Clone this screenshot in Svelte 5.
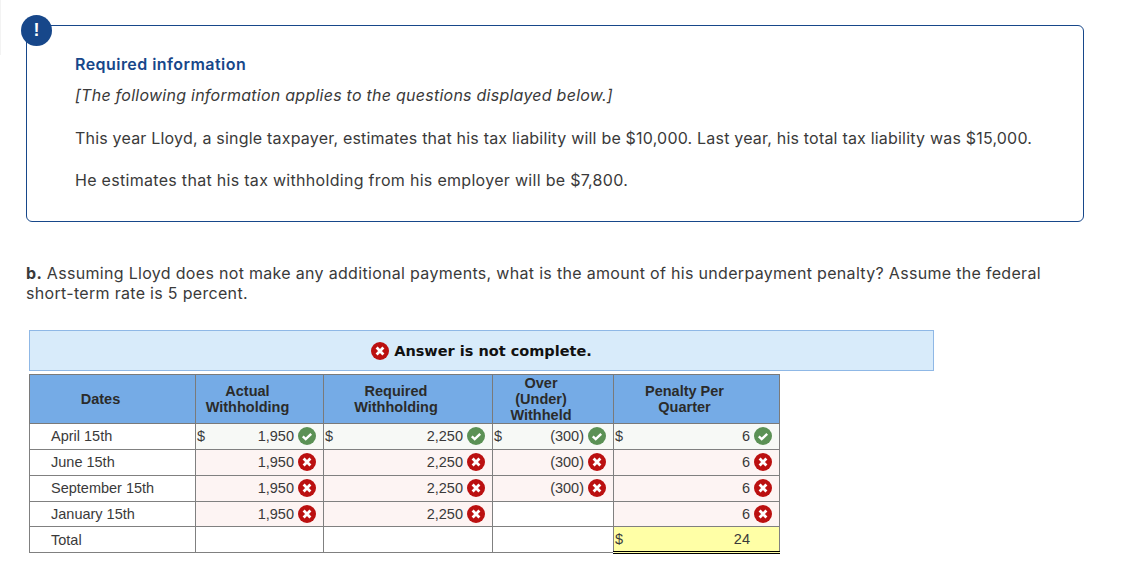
<script>
  const rows = [
    { date: 'April 15th', a: '1,950', r: '2,250', o: '(300)', p: '6', ok: [true, true, true, true], dollar: true },
    { date: 'June 15th', a: '1,950', r: '2,250', o: '(300)', p: '6', ok: [false, false, false, false] },
    { date: 'September 15th', a: '1,950', r: '2,250', o: '(300)', p: '6', ok: [false, false, false, false] },
    { date: 'January 15th', a: '1,950', r: '2,250', o: '', p: '6', ok: [false, false, null, false], short: true }
  ];
</script>

{#snippet mark(ok)}
  {#if ok === true}
    <svg class="mark" viewBox="0 0 18 18"><circle cx="9" cy="9" r="9" fill="#5b9155" /><path d="M4.8 9.4l2.9 2.8L13.2 6.8" fill="none" stroke="#fff" stroke-width="2.4" /></svg>
  {:else if ok === false}
    <svg class="mark" viewBox="0 0 18 18"><circle cx="9" cy="9" r="9" fill="#bb1010" /><path d="M5.6 5.6l6.8 6.8M12.4 5.6l-6.8 6.8" fill="none" stroke="#fff" stroke-width="2.8" /></svg>
  {/if}
{/snippet}

<main>
  <div class="edge"></div>
  <div class="flag">!</div>
  <section class="info">
    <h2>Required information</h2>
    <p class="note">[The following information applies to the questions displayed below.]</p>
    <p class="l1">This year Lloyd, a single taxpayer, estimates that his tax liability will be $10,000. Last year, his total tax liability was $15,000.</p>
    <p class="l2">He estimates that his tax withholding from his employer will be $7,800.</p>
  </section>

  <p class="question"><b>b.</b> Assuming Lloyd does not make any additional payments, what is the amount of his underpayment penalty? Assume the federal<br />short-term rate is 5 percent.</p>

  <div class="banner">{@render mark(false)}<strong>Answer is not complete.</strong></div>

  <table>
    <colgroup>
      <col class="c0" />
      <col class="c1" />
      <col class="c2" />
      <col class="c3" />
      <col class="c4" />
    </colgroup>
    <thead>
      <tr>
        <th>Dates</th>
        <th>Actual<br />Withholding</th>
        <th>Required<br />Withholding</th>
        <th>Over<br />(Under)<br />Withheld</th>
        <th>Penalty Per<br />Quarter</th>
      </tr>
    </thead>
    <tbody>
      {#each rows as row}
        <tr class:short={row.short}>
          <td class="date">{row.date}</td>
          {#each [row.a, row.r, row.o, row.p] as v, i}
            <td class:good={row.ok[i] === true} class:bad={row.ok[i] === false}>
              <div class="cell">
                {#if row.dollar}<span class="dollar">$</span>{/if}
                <span class="val">{v}</span>
                <span class="slot">{@render mark(row.ok[i])}</span>
              </div>
            </td>
          {/each}
        </tr>
      {/each}
      <tr class="short">
        <td class="date">Total</td>
        <td></td>
        <td></td>
        <td></td>
        <td class="total"><div class="cell"><span class="dollar">$</span><span class="val">24</span><span class="slot"></span></div></td>
      </tr>
    </tbody>
  </table>
</main>

<style>
  :global(body) {
    margin: 0;
    background: #fff;
    color: #3a3a3a;
    font-family: Inter, "Open Sans", sans-serif;
  }

  main {
    position: relative;
    height: 569px;
    overflow: hidden;
    padding: 25px 49px 0 26px;
    box-sizing: border-box;
  }

  .edge {
    position: absolute;
    left: 0;
    top: 0;
    width: 1px;
    height: 55px;
    background: #f3f3f3;
  }

  .flag {
    position: absolute;
    left: 21px;
    top: 15px;
    width: 31px;
    height: 31px;
    border-radius: 50%;
    background: #17478a;
    color: #fff;
    font: bold 18px/31px "Liberation Sans", sans-serif;
    text-align: center;
  }

  .info {
    height: 197px;
    box-sizing: border-box;
    border: 1px solid #17478a;
    border-radius: 6px;
    padding: 28px 47px 0 48px;
  }

  h2 {
    margin: 0;
    font-size: 16px;
    line-height: 20px;
    font-weight: 600;
    letter-spacing: 0.45px;
    color: #17478a;
  }

  .info p {
    margin: 0;
    font-size: 16px;
    line-height: 20px;
    letter-spacing: 0.2px;
  }

  .info .note {
    padding-top: 11px;
    font-style: italic;
    letter-spacing: 0.25px;
  }

  .info .l1 {
    padding-top: 23px;
  }

  .info .l2 {
    padding-top: 22px;
    letter-spacing: 0.3px;
  }

  .question {
    margin: 41px 0 0 0;
    font-size: 16px;
    line-height: 20px;
    letter-spacing: 0.31px;
  }

  .banner {
    margin: 27px 150px 0 3px;
    height: 41px;
    box-sizing: border-box;
    background: #d8ebfa;
    border: 1px solid #8fb8e6;
    display: flex;
    align-items: center;
    justify-content: center;
    gap: 5px;
  }

  .banner strong {
    font: bold 14.5px "DejaVu Sans", sans-serif;
    color: #111;
  }

  table {
    margin: 3px 0 0 3px;
    border-collapse: collapse;
    table-layout: fixed;
    width: 750px;
    font: 14.5px "Liberation Sans", sans-serif;
    color: #3a3a3a;
  }

  th {
    height: 48px;
    padding: 0 24px 0 0;
    background: #75abe6;
    border: 1px solid #7a7a7a;
    font-size: 14.5px;
    font-weight: bold;
    line-height: 16px;
    color: #2b2b2b;
  }

  td {
    height: 24px;
    padding: 0 0 1px;
    border: 1px solid #808080;
  }

  .short td {
    padding-bottom: 0;
  }

  .c0 { width: 166px; }
  .c1 { width: 128px; }
  .c2 { width: 169px; }
  .c3 { width: 121px; }
  .c4 { width: 166px; }

  td.date {
    padding-left: 21px;
  }

  .good {
    background: #f7f9f6;
  }

  .bad {
    background: #fdf4f3;
  }

  .cell {
    display: flex;
    align-items: center;
    padding-left: 1px;
  }

  .val {
    flex: 1;
    text-align: right;
  }

  .slot {
    width: 29px;
    height: 18px;
    display: flex;
    padding-left: 4px;
    box-sizing: border-box;
  }

  .mark {
    width: 18px;
    height: 18px;
    display: block;
    flex: none;
  }

  .total {
    background: #ffffa6;
    border-top: 1px solid #000;
    border-bottom: 3px double #000;
  }
</style>
